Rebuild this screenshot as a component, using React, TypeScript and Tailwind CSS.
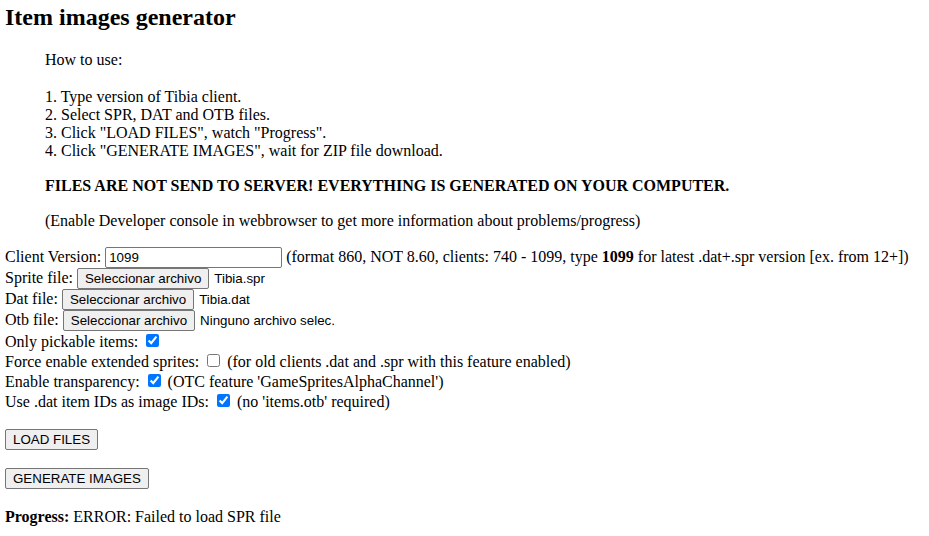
import React from "react";

const btn =
  "inline-block align-baseline bg-[#efefef] border border-[#767676] rounded-[2px] px-[7px] py-[2px] font-['Liberation_Sans',Arial,sans-serif] text-[13.333px] leading-[normal] text-black";
const fileName =
  "font-['Liberation_Sans',Arial,sans-serif] text-[13.333px] leading-[normal] text-black";
const cb = "align-baseline w-[13px] h-[13px] m-[3px_3px_3px_4px] accent-[#0075ff]";

function FileRow({ label, name }: { label: string; name: string }) {
  return (
    <div>
      {label}{" "}
      <button className={btn + " mr-[5px]"}>Seleccionar archivo</button>
      <span className={fileName}>{name}</span>
    </div>
  );
}

export default function App() {
  return (
    <div className="min-h-[536px] bg-white text-black font-['Liberation_Serif','Times_New_Roman',serif] text-[16px] leading-[normal] pl-[5px] pt-[4px]">
      <h2 className="text-[24px] font-bold leading-[normal] mb-[20px]">Item images generator</h2>
      <blockquote className="ml-[40px] mb-[17px]">
        <p>How to use:</p>
        <p className="mt-[18.5px]">
          1. Type version of Tibia client.
          <br />
          2. Select SPR, DAT and OTB files.
          <br />
          3. Click "LOAD FILES", watch "Progress".
          <br />
          4. Click "GENERATE IMAGES", wait for ZIP file download.
        </p>
        <p className="mt-[17px] font-bold">
          FILES ARE NOT SEND TO SERVER! EVERYTHING IS GENERATED ON YOUR COMPUTER.
        </p>
        <p className="mt-[17px]">
          (Enable Developer console in webbrowser to get more information about problems/progress)
        </p>
      </blockquote>
      <div>
        Client Version:{" "}
        <input
          type="text"
          defaultValue="1099"
          className="inline-block align-baseline w-[177px] h-[21px] border border-[#767676] rounded-[2px] px-[3px] py-[1px] bg-white font-['Liberation_Sans',Arial,sans-serif] text-[13.333px] leading-[normal] text-black outline-none"
        />{" "}
        (format 860, NOT 8.60, clients: 740 - 1099, type <b>1099</b> for latest .dat+.spr version [ex. from
        12+])
      </div>
      <FileRow label="Sprite file:" name="Tibia.spr" />
      <FileRow label="Dat file:" name="Tibia.dat" />
      <FileRow label="Otb file:" name="Ninguno archivo selec." />
      <div>
        Only pickable items: <input type="checkbox" defaultChecked className={cb} />
      </div>
      <div>
        Force enable extended sprites: <input type="checkbox" className={cb} /> (for old clients .dat and .spr
        with this feature enabled)
      </div>
      <div>
        Enable transparency: <input type="checkbox" defaultChecked className={cb} /> (OTC feature
        'GameSpritesAlphaChannel')
      </div>
      <div>
        Use .dat item IDs as image IDs: <input type="checkbox" defaultChecked className={cb} /> (no 'items.otb'
        required)
      </div>
      <p className="mt-[18px]">
        <button className={btn}>LOAD FILES</button>
      </p>
      <p className="mt-[18px]">
        <button className={btn}>GENERATE IMAGES</button>
      </p>
      <p className="mt-[19px]">
        <b>Progress:</b> ERROR: Failed to load SPR file
      </p>
    </div>
  );
}
